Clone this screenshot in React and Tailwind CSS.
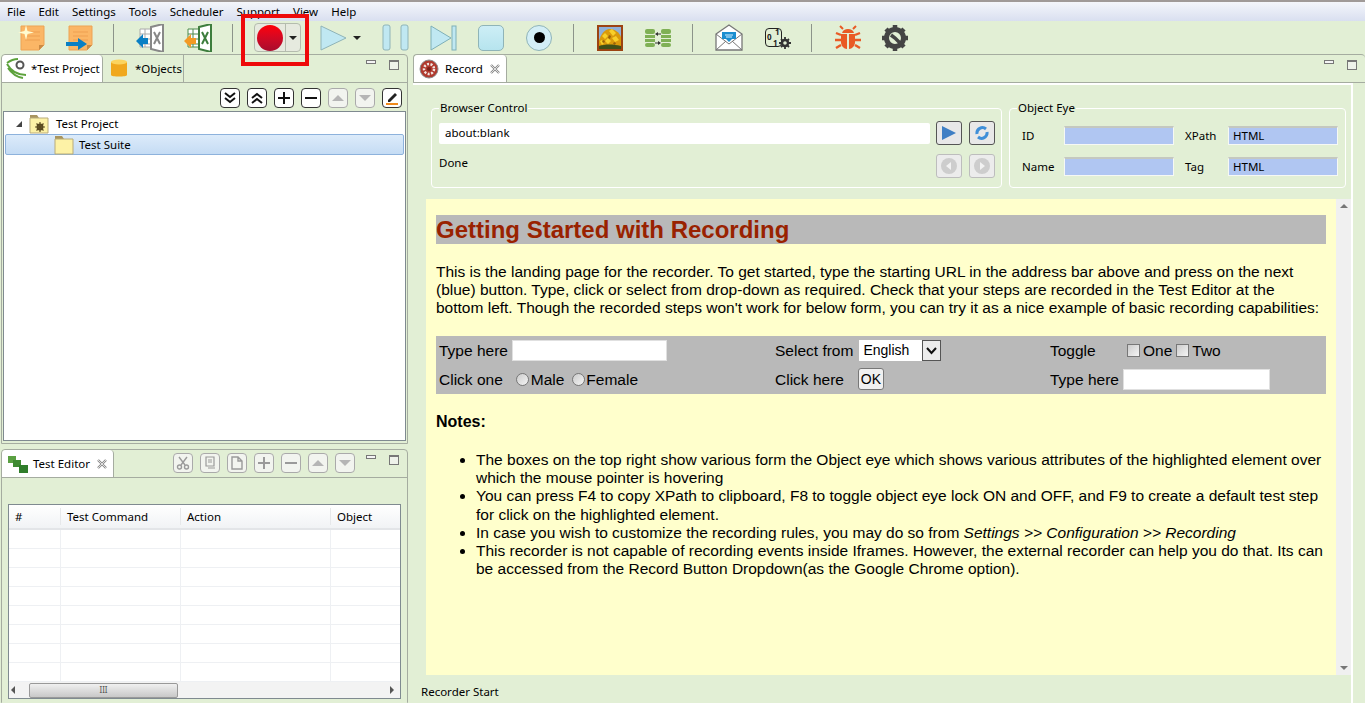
import { useState } from 'react'

const ui = { fontFamily: '"Noto Sans", sans-serif' }
const web = { fontFamily: '"Liberation Sans", Arial, sans-serif' }

function Sep({ className }) {
  return <div className={`h-[28px] w-px shrink-0 bg-[#8c948a] ${className}`} />
}

function Slot({ className = '', children }) {
  return <div className={`flex h-full w-[48px] shrink-0 items-center justify-center ${className}`}>{children}</div>
}

function NoteIcon({ star, arrow }) {
  return (
    <svg width="30" height="30" viewBox="0 0 30 30">
      <path d="M4 3h23v19l-5 5H4z" fill="#fbb666" stroke="#eda355" />
      <path d="M22 27v-5h5z" fill="#c98a45" />
      <path d="M8 9h15M8 13h15M8 17h15" stroke="#ee9f50" />
      {star && <path d="M9 2l1.500 6L17 9.500 10.500 11 9 17 7.500 11 1 9.500 7.500 8z" fill="#fffbd0" />}
      {arrow && <path d="M1 19h12v-4l9 6-9 6v-4H1z" fill="#0a7fc4" />}
    </svg>
  )
}

function ExcelIcon({ color, grid, arrow }) {
  return (
    <svg width="30" height="28" viewBox="0 0 30 28">
      <path d="M5 5h13v18H5z" fill="#fff" />
      <path d="M5 5h13v18H5zM5 10h13M5 15h13M5 20h13M10 5v18" fill="none" stroke={grid} />
      <path d="M16 3l12-3v28l-12-3z" fill="#fff" stroke={color} strokeWidth="2" />
      <path d="M19 8l6 12M25 8l-6 12" stroke={color} strokeWidth="2" />
      <path d="M1 17l7-7v4h5v6H8v4z" fill={arrow} />
    </svg>
  )
}

function RecordButton() {
  return (
    <div className="ml-[21px] flex h-[29px] w-[47px] shrink-0 rounded border border-[#b4bcae] bg-[#e6eadf]">
      <div className="flex w-[31px] items-center justify-center border-r border-[#b4bcae]">
        <div className="h-[26px] w-[26px] rounded-full bg-gradient-to-b from-[#ff0000] to-[#a80b2c]" />
      </div>
      <div className="flex flex-1 items-center justify-center">
        <Caret />
      </div>
    </div>
  )
}

function Caret() {
  return <div className="h-0 w-0 border-x-[4px] border-t-[4px] border-x-transparent border-t-[#222]" />
}

function PlayIcon() {
  return (
    <svg width="27" height="26" viewBox="0 0 27 26">
      <path d="M1 1l25 12L1 25z" fill="#c0e8f2" stroke="#8fb4b8" />
    </svg>
  )
}

function PauseIcon() {
  return (
    <svg width="27" height="27" viewBox="0 0 27 27">
      <rect x="1" y="1" width="7" height="25" rx="2" fill="#c0e8f2" stroke="#8fb4b8" />
      <rect x="19" y="1" width="7" height="25" rx="2" fill="#c0e8f2" stroke="#8fb4b8" />
    </svg>
  )
}

function NextIcon() {
  return (
    <svg width="27" height="26" viewBox="0 0 27 26">
      <path d="M1 1l20 12L1 25z" fill="#c0e8f2" stroke="#7fb0b8" />
      <rect x="22" y="1" width="4" height="24" fill="#c0e8f2" stroke="#7fb0b8" />
    </svg>
  )
}

function GoldImage() {
  return (
    <svg width="26" height="26" viewBox="0 0 26 26">
      <rect width="26" height="26" fill="#9c4312" />
      <rect x="2" y="2" width="22" height="22" fill="#8fb0d8" />
      <path d="M2 24v-8c2-7 5-11 10-12 6 0 10 3 12 8v12z" fill="#d99a0c" />
      <path d="M5 11l3-3 3 3-3 3zM12 6l3-2 4 4-3 3zM8 16l3-3 3 3-3 3zM15 13l4-2 3 4-4 2zM3 16l2-1 2 3-2 2z" fill="#f8d02a" />
      <path d="M12 10l2 1-1 3-2-1zM6 15l2 1-1 2-2-1zM17 17l2 1-1 2-2-1z" fill="#96620a" />
      <path d="M2 21c6-2 14-2 22 0v3H2z" fill="#3f5018" />
    </svg>
  )
}

function DbCompare() {
  const stack = (x) => (
    <g fill="#7fb055">
      <rect x={x} y="0" width="10" height="5" rx="2" />
      <rect x={x} y="6" width="10" height="3" />
      <rect x={x} y="10" width="10" height="3" />
      <rect x={x} y="14" width="10" height="4" rx="2" />
    </g>
  )
  return (
    <svg width="26" height="18" viewBox="0 0 26 18">
      {stack(0)}
      {stack(16)}
      <path d="M12 5h4M10 14h4" stroke="#333" />
      <path d="M10 5l3-2v4zM16 14l-3-2v4z" fill="#333" />
    </svg>
  )
}

function MailIcon() {
  return (
    <svg width="28" height="27" viewBox="0 0 28 27">
      <path d="M1 10L14 1l13 9v16H1z" fill="#fff" stroke="#777" strokeWidth="1.300" />
      <path d="M1 26l10-9M27 26l-10-9M1 10l13 10 13-10" fill="none" stroke="#777" />
      <path d="M7 8h14v7h-4l-3 3-3-3H7z" fill="#1b8ed0" />
      <path d="M10 11h8M11 13h6" stroke="#d8f0ff" />
    </svg>
  )
}

function BinaryIcon() {
  return (
    <div className="relative h-[26px] w-[26px]">
      <div className="absolute left-px top-[3px] h-[19px] w-[17px] rounded-[4px] border border-[#222]" />
      <span className="absolute left-[3px] top-[8px] text-[8px] font-bold leading-none text-[#222]">0</span>
      <span className="absolute left-[11px] top-[3px] text-[8px] font-bold leading-none text-[#222]">1</span>
      <span className="absolute left-[9px] top-[14px] text-[8px] font-bold leading-none text-[#222]">1</span>
      <svg className="absolute left-[15px] top-[12px]" width="12" height="12" viewBox="0 0 12 12">
        <circle cx="6" cy="6" r="3" fill="none" stroke="#333" strokeWidth="2.400" />
        <path d="M6 0v3M6 9v3M0 6h3M9 6h3M2 2l2 2M8 8l2 2M2 10l2-2M8 4l2-2" stroke="#333" strokeWidth="1.800" />
      </svg>
    </div>
  )
}

function BugIcon() {
  return (
    <svg width="26" height="26" viewBox="0 0 26 26" fill="#e95a25">
      <path d="M7 8c1-3 3-4 6-4s5 1 6 4z" />
      <path d="M6 9h6v15c-3 0-6-3-6-7zM14 9h6v8c0 4-3 7-6 7z" />
      <path d="M8 4L5 1M18 4l3-3" stroke="#e95a25" strokeWidth="2" />
      <path d="M6 10L1 8M6 15H0M6 20l-5 3M20 10l5-2M20 15h6M20 20l5 3" stroke="#e95a25" strokeWidth="2.400" />
    </svg>
  )
}

function GearIcon() {
  return (
    <svg width="26" height="26" viewBox="0 0 26 26">
      <circle cx="13" cy="13" r="8.500" fill="none" stroke="#444" strokeWidth="5" />
      <path d="M13 0v5M13 21v5M0 13h5M21 13h5M4 4l3.500 3.500M18.500 18.500L22 22M4 22l3.500-3.500M18.500 7.500L22 4" stroke="#444" strokeWidth="4.500" />
      <path d="M9 10l4 3 5 5" stroke="#444" strokeWidth="3.500" />
    </svg>
  )
}

function MainToolbar() {
  return (
    <div className="flex h-[33px] items-center bg-[#e2efd5] pl-[8px]">
      <Slot><NoteIcon star /></Slot>
      <Slot><NoteIcon arrow /></Slot>
      <Sep className="ml-[9px]" />
      <Slot className="ml-[12px]"><ExcelIcon color="#888" grid="#aaa" arrow="#0a7fc4" /></Slot>
      <Slot><ExcelIcon color="#3d7d3d" grid="#4d8a4d" arrow="#f39a24" /></Slot>
      <Sep className="ml-[10px]" />
      <RecordButton />
      <div className="ml-[16px] flex w-[32px] shrink-0 justify-center"><PlayIcon /></div>
      <div className="ml-[4px] flex w-[8px] shrink-0 justify-center"><Caret /></div>
      <Slot className="ml-[10px]"><PauseIcon /></Slot>
      <Slot><NextIcon /></Slot>
      <Slot><div className="h-[26px] w-[26px] rounded-[5px] border border-[#8fb4b8] bg-gradient-to-b from-[#cdeef6] to-[#b6e4ee]" /></Slot>
      <Slot>
        <div className="flex h-[26px] w-[26px] items-center justify-center rounded-full border border-[#8fb4b8] bg-[#d3eef6]">
          <div className="h-[11px] w-[11px] rounded-full bg-black" />
        </div>
      </Slot>
      <Sep className="ml-[10px]" />
      <Slot className="ml-[12px]"><GoldImage /></Slot>
      <Slot><DbCompare /></Slot>
      <Sep className="ml-[10px]" />
      <Slot className="ml-[12px]"><MailIcon /></Slot>
      <Slot><BinaryIcon /></Slot>
      <Sep className="ml-[10px]" />
      <Slot className="ml-[12px]"><BugIcon /></Slot>
      <Slot className="-ml-px"><GearIcon /></Slot>
    </div>
  )
}

function WindowButtons() {
  return (
    <div className="flex shrink-0 items-start">
      <div className="mt-[5px] h-[4px] w-[10px] border border-[#777] bg-[#f4f4f4]" />
      <div className="ml-[13px] mt-[5px] h-[10px] w-[10px] border border-[#777] border-t-2 bg-[#eef2ea]" />
    </div>
  )
}

function ToolButton({ disabled, children }) {
  return (
    <div className={`flex h-[20px] w-[20px] shrink-0 items-center justify-center rounded-[4px] border bg-[#f2f4ef] ${disabled ? 'border-[#aaa]' : 'border-[#333] bg-white'}`}>
      <svg width="14" height="14" viewBox="0 0 14 14" fill="none" stroke={disabled ? '#9a9a9a' : '#111'} strokeWidth="2">
        {children}
      </svg>
    </div>
  )
}

const plus = <path d="M7 1v12M1 7h12" />
const minus = <path d="M1 7h12" />
const upTri = <path d="M1 10l6-6 6 6z" fill="#b5b5b5" stroke="none" />
const downTri = <path d="M1 4l6 6 6-6z" fill="#b5b5b5" stroke="none" />

function FolderIcon({ gear }) {
  return (
    <svg width="20" height="20" viewBox="0 0 20 20">
      <path d="M1 1h7l2 3H1z" fill="#a9955f" />
      <path d="M1 4h18v15H1z" fill="#fdf2a6" stroke="#b8ab7a" />
      {gear && <circle cx="11" cy="13" r="2.500" fill="none" stroke="#5a4a20" strokeWidth="2" />}
      {gear && <path d="M11 8v10M6 13h10M7.500 9.500l7 7M14.500 9.500l-7 7" stroke="#5a4a20" strokeWidth="1.200" />}
    </svg>
  )
}

function CloseX() {
  return (
    <svg width="10" height="10" viewBox="0 0 10 10" className="shrink-0">
      <path d="M1 1l8 8M9 1L1 9" stroke="#8a8a8a" strokeWidth="2.400" />
      <path d="M1 1l8 8M9 1L1 9" stroke="#f4f4f4" strokeWidth="0.800" />
    </svg>
  )
}

function ProjectPanel() {
  return (
    <div className="h-[390px] rounded-t-[4px] border border-[#a5aca0]">
      <div className="flex h-[28px] border-b border-[#a5aca0]">
        <div className="flex w-[101px] items-center gap-[2px] whitespace-nowrap rounded-t-[4px] border-r border-[#a5aca0] bg-white pl-[3px] text-[11.500px] text-black">
          <svg width="24" height="22" viewBox="0 0 24 22" fill="none" className="shrink-0">
            <path d="M2 6c4 7 10 11 19 11M3 10c4 6 9 9 15 10M2 5c4-3 7-4 11-4" stroke="#5da23c" strokeWidth="2" />
            <circle cx="15" cy="7" r="3.500" stroke="#555" strokeWidth="2" />
          </svg>
          <span>*Test Project</span>
        </div>
        <div className="flex w-[81px] items-center gap-[7px] border-r border-[#a5aca0] pl-[7px] text-[11.500px] text-black">
          <svg width="18" height="19" viewBox="0 0 18 19" className="shrink-0">
            <path d="M1 3v13c0 2 16 2 16 0V3z" fill="#f0a81e" />
            <ellipse cx="9" cy="3" rx="8" ry="2.500" fill="#fbd45f" />
          </svg>
          <span>*Objects</span>
        </div>
        <div className="flex flex-1 justify-end pr-[8px]">
          <WindowButtons />
        </div>
      </div>
      <div className="h-[360px] bg-[#e2efd5] px-px pt-px">
        <div className="flex h-[27px] items-center justify-end gap-[7px] bg-[#e2efd5] pr-[4px]">
          <ToolButton><path d="M2 2l5 4 5-4M2 7l5 4 5-4" /></ToolButton>
          <ToolButton><path d="M2 7l5-4 5 4M2 12l5-4 5 4" /></ToolButton>
          <ToolButton>{plus}</ToolButton>
          <ToolButton>{minus}</ToolButton>
          <ToolButton disabled>{upTri}</ToolButton>
          <ToolButton disabled>{downTri}</ToolButton>
          <div className="flex h-[20px] w-[20px] shrink-0 items-end justify-center rounded-[4px] border border-[#333] bg-white pb-px">
            <svg width="14" height="15" viewBox="0 0 14 15">
              <path d="M3 9l7-7 2 2-7 7H3z" fill="#222" />
              <path d="M1 13h12" stroke="#f08a1c" strokeWidth="2" />
            </svg>
          </div>
        </div>
        <div className="h-[330px] border border-[#7f8a90] bg-white px-px pt-px text-[11.500px] text-black">
          <div className="flex h-[21px] items-center pl-[11px]">
            <div className="h-0 w-0 border-b-[6px] border-l-[6px] border-b-[#444] border-l-transparent" />
            <div className="ml-[7px]"><FolderIcon gear /></div>
            <span className="ml-[7px]">Test Project</span>
          </div>
          <div className="flex h-[21px] items-center rounded-[2px] border border-[#8db2dc] bg-gradient-to-b from-[#dcebfa] to-[#c5dcf4] pl-[48px]">
            <FolderIcon />
            <span className="ml-[5px]">Test Suite</span>
          </div>
        </div>
      </div>
    </div>
  )
}

function EditorPanel() {
  const rows = [0, 1, 2, 3, 4, 5, 6, 7]
  return (
    <div className="mt-[5px] flex-1 rounded-t-[4px] border border-[#a5aca0]">
      <div className="flex h-[28px] border-b border-[#a5aca0]">
        <div className="flex w-[112px] items-center rounded-t-[4px] border-r border-[#a5aca0] bg-white pl-[5px] text-[11.500px] text-black">
          <svg width="22" height="20" viewBox="0 0 22 20">
            <rect x="1" y="2" width="8" height="7" fill="#5aa042" />
            <rect x="6" y="6" width="8" height="7" fill="#3f8a32" />
            <rect x="12" y="11" width="9" height="8" fill="#2f7d2a" />
          </svg>
          <span className="ml-[4px]">Test Editor</span>
          <span className="ml-[7px]"><CloseX /></span>
        </div>
        <div className="flex flex-1 items-start justify-end pr-[8px] pt-[3px]">
          <div className="mr-[11px] flex gap-[7px]">
            <ToolButton disabled><path d="M3 1l6 8M11 1L5 9" strokeWidth="1.400" /><circle cx="3.500" cy="11" r="2" strokeWidth="1.400" /><circle cx="10.500" cy="11" r="2" strokeWidth="1.400" /></ToolButton>
            <ToolButton disabled><path d="M3 1h8v9H3zM5 4h4M5 6h4M5 12h7" strokeWidth="1.200" /></ToolButton>
            <ToolButton disabled><path d="M2 1h6l4 4v8H2zM8 1v4h4" strokeWidth="1.400" /></ToolButton>
            <ToolButton disabled>{plus}</ToolButton>
            <ToolButton disabled>{minus}</ToolButton>
            <ToolButton disabled>{upTri}</ToolButton>
            <ToolButton disabled>{downTri}</ToolButton>
          </div>
          <div className="-mt-[3px]"><WindowButtons /></div>
        </div>
      </div>
      <div className="h-full bg-[#e2efd5] px-[6px] pt-[26px]">
        <div className="h-[195px] w-[393px] border border-[#7f8a90] bg-white text-[11.500px] text-black">
          <div className="grid h-[25px] grid-cols-[51px_120px_150px_1fr] items-center border-b-2 border-[#e3e5e8] bg-gradient-to-b from-white to-[#f1f3f5]">
            <span className="pl-[6px]">#</span>
            <span className="border-l border-[#e6e8ea] pl-[6px]">Test Command</span>
            <span className="border-l border-[#e6e8ea] pl-[6px]">Action</span>
            <span className="border-l border-[#e6e8ea] pl-[6px]">Object</span>
          </div>
          {rows.map((r) => (
            <div key={r} className="grid h-[19px] grid-cols-[51px_120px_150px_1fr] border-b border-[#eef0f3]">
              <span />
              <span className="border-l border-[#eef0f3]" />
              <span className="border-l border-[#eef0f3]" />
              <span className="border-l border-[#eef0f3]" />
            </div>
          ))}
          <div className="flex h-[16px] items-center bg-[#f3f3f3] px-[2px]">
            <div className="h-0 w-0 border-y-[4px] border-r-[4px] border-y-transparent border-r-[#555]" />
            <div className="ml-[14px] flex h-[15px] w-[149px] items-center justify-center rounded-[2px] border border-[#999] bg-gradient-to-b from-[#f0f0f0] to-[#c8c8c8] text-[8px] leading-none text-[#555]">III</div>
            <div className="ml-auto mr-[4px] h-0 w-0 border-y-[4px] border-l-[4px] border-y-transparent border-l-[#555]" />
          </div>
        </div>
      </div>
    </div>
  )
}

function NavButton({ disabled, children }) {
  return (
    <div className={`flex h-[24px] w-[26px] items-center justify-center rounded-[3px] border ${disabled ? 'border-[#bdbdbd] bg-[#ececec]' : 'border-[#555] bg-[#e8e8e8]'}`}>
      {children}
    </div>
  )
}

function EyeField({ label, value }) {
  return (
    <>
      <span>{label}</span>
      <div className="h-[19px] border border-t-2 border-[#f6f8f4] border-t-[#c4c8c0] bg-[#b0c6f2] pl-[4px] leading-[16px]">{value}</div>
    </>
  )
}

function RecordControls() {
  return (
    <div className="flex h-[114px] gap-[7px] pl-[18px] pt-[15px] text-[11.500px] text-black">
      <fieldset className="h-[88px] w-[571px] rounded-[4px] border border-white pl-[7px]">
        <legend className="px-px leading-[16px]">Browser Control</legend>
        <div className="mt-[5px] flex h-[24px] items-center">
          <div className="mt-[1px] h-[21px] w-[491px] rounded-[2px] bg-white pl-[6px] leading-[20px]">about:blank</div>
          <div className="ml-[6px] flex gap-[7px]">
            <NavButton>
              <svg width="16" height="16" viewBox="0 0 16 16"><path d="M1 1l14 7-14 7z" fill="#3f7fc4" /></svg>
            </NavButton>
            <NavButton>
              <svg width="16" height="16" viewBox="0 0 16 16" fill="none" stroke="#3f8fd8" strokeWidth="3">
                <path d="M3 9a5.500 5.500 0 0 1 9-5M13 7a5.500 5.500 0 0 1-9 5" />
              </svg>
            </NavButton>
          </div>
        </div>
        <div className="flex h-[33px] items-start pt-[9px]">
          <span className="w-[497px]">Done</span>
          <div className="flex gap-[7px]">
            <NavButton disabled>
              <svg width="16" height="16" viewBox="0 0 16 16"><circle cx="8" cy="8" r="8" fill="#cdcdcd" /><path d="M10 4v8L5 8z" fill="#f2f2f2" /></svg>
            </NavButton>
            <NavButton disabled>
              <svg width="16" height="16" viewBox="0 0 16 16"><circle cx="8" cy="8" r="8" fill="#cdcdcd" /><path d="M6 4v8l5-4z" fill="#f2f2f2" /></svg>
            </NavButton>
          </div>
        </div>
      </fieldset>
      <fieldset className="h-[88px] w-[337px] rounded-[4px] border border-white pl-[12px]">
        <legend className="ml-[-5px] px-px leading-[16px]">Object Eye</legend>
        <div className="mt-[10px] grid grid-cols-[42px_110px_54px_110px] items-center gap-y-[12px]">
          <EyeField label="ID" value="" />
          <span className="pl-[11px]">XPath</span>
          <div className="h-[19px] border border-t-2 border-[#f6f8f4] border-t-[#c4c8c0] bg-[#b0c6f2] pl-[4px] leading-[16px]">HTML</div>
          <EyeField label="Name" value="" />
          <span className="pl-[11px]">Tag</span>
          <div className="h-[19px] border border-t-2 border-[#f6f8f4] border-t-[#c4c8c0] bg-[#b0c6f2] pl-[4px] leading-[16px]">HTML</div>
        </div>
      </fieldset>
    </div>
  )
}

function SampleForm() {
  const [lang, setLang] = useState('English')
  const textBox = 'h-[21px] border border-[#e0e0e0] bg-white'
  const radio = 'h-[13px] w-[13px] shrink-0 rounded-full border border-[#777] bg-gradient-to-br from-[#ccc] to-[#f4f4f4]'
  const check = 'h-[13px] w-[13px] shrink-0 border border-[#777] bg-gradient-to-br from-[#ccc] to-[#f4f4f4]'
  return (
    <div className="mt-[19px] grid h-[58px] w-[890px] grid-cols-[336px_275px_1fr] content-center gap-y-[7px] bg-[#b9b9b9] pl-[3px] text-[15.500px] leading-[21px] text-black">
      <div className="flex items-center">
        <span>Type here</span>
        <div className={`ml-[4px] w-[155px] ${textBox}`} />
      </div>
      <div className="flex items-center">
        <span>Select from</span>
        <div className="ml-[6px] flex h-[21px] w-[82px] bg-white text-[14px]">
          <span className="flex-1 pl-[4px] leading-[21px]">{lang}</span>
          <button type="button" onClick={() => setLang('English')} className="flex w-[19px] items-center justify-center border border-[#555] bg-[#ececec]">
            <svg width="11" height="8" viewBox="0 0 11 8" fill="none"><path d="M1 1l4.500 5L10 1" stroke="#111" strokeWidth="2" /></svg>
          </button>
        </div>
      </div>
      <div className="flex items-center">
        <span className="w-[77px]">Toggle</span>
        <div className={check} />
        <span className="ml-[3px]">One</span>
        <div className={`ml-[4px] ${check}`} />
        <span className="ml-[3px]">Two</span>
      </div>
      <div className="flex items-center">
        <span>Click one</span>
        <div className={`ml-[13px] ${radio}`} />
        <span className="ml-[2px]">Male</span>
        <div className={`ml-[8px] ${radio}`} />
        <span className="ml-px">Female</span>
      </div>
      <div className="flex items-center">
        <span>Click here</span>
        <div className="ml-[14px] flex h-[22px] w-[26px] items-center justify-center rounded-[3px] border border-[#777] bg-[#f0f0f0] text-[14px]">OK</div>
      </div>
      <div className="flex items-center">
        <span>Type here</span>
        <div className={`ml-[4px] w-[147px] ${textBox}`} />
      </div>
    </div>
  )
}

function LandingPage() {
  return (
    <div className="h-[476px] w-[911px] bg-[#ffffcc] pl-[10px] pt-[16px] text-black" style={web}>
      <h1 className="flex h-[29px] w-[890px] items-center bg-[#b9b9b9] text-[24px] font-bold text-[#992200]">
        Getting Started with Recording
      </h1>
      <p className="mt-[19px] w-[890px] text-[15.500px] leading-[18px]">
        This is the landing page for the recorder. To get started, type the starting URL in the address bar above and press on the next (blue) button. Type, click or select from drop-down as required. Check that your steps are recorded in the Test Editor at the bottom left. Though the recorded steps won't work for below form, you can try it as a nice example of basic recording capabilities:
      </p>
      <SampleForm />
      <p className="mt-[19px] text-[16px] font-bold leading-[18px]">Notes:</p>
      <ul className="mt-[20px] w-[890px] list-disc pl-[40px] text-[15.500px] leading-[18.200px]">
        <li>The boxes on the top right show various form the Object eye which shows various attributes of the highlighted element over which the mouse pointer is hovering</li>
        <li>You can press F4 to copy XPath to clipboard, F8 to toggle object eye lock ON and OFF, and F9 to create a default test step for click on the highlighted element.</li>
        <li>In case you wish to customize the recording rules, you may do so from <i>Settings &gt;&gt; Configuration &gt;&gt; Recording</i></li>
        <li>This recorder is not capable of recording events inside Iframes. However, the external recorder can help you do that. Its can be accessed from the Record Button Dropdown(as the Google Chrome option).</li>
      </ul>
    </div>
  )
}

function RecordPanel() {
  return (
    <div className="ml-[5px] flex h-full w-[952px] flex-col">
      <div className="flex h-[29px] rounded-t-[4px] border-y border-l border-[#a5aca0]">
        <div className="flex w-[93px] items-center rounded-t-[4px] border-r border-[#a5aca0] bg-white pl-[5px] text-[11.500px] text-black">
          <svg width="20" height="20" viewBox="0 0 20 20">
            <circle cx="10" cy="10" r="9" fill="#b03a2e" stroke="#8d8d8d" />
            <circle cx="10" cy="10" r="5" fill="none" stroke="#f1e6e2" strokeWidth="2.500" strokeDasharray="2 1.500" />
            <circle cx="10" cy="10" r="2" fill="#7d2018" />
          </svg>
          <span className="ml-[6px]">Record</span>
          <span className="ml-[7px]"><CloseX /></span>
        </div>
        <div className="flex flex-1 justify-end pr-[8px]">
          <WindowButtons />
        </div>
      </div>
      <div className="w-[940px] flex-1 border-t-2 border-r-2 border-white bg-[#e2efd5]">
        <RecordControls />
        <div className="flex pl-[13px]">
          <LandingPage />
          <div className="flex h-[476px] w-[15px] flex-col items-center justify-between bg-[#f0f0f0] py-[5px]">
            <div className="h-0 w-0 border-x-[4px] border-b-[4px] border-x-transparent border-b-[#777]" />
            <div className="h-0 w-0 border-x-[4px] border-t-[4px] border-x-transparent border-t-[#777]" />
          </div>
        </div>
        <p className="pl-[8px] pt-[9px] text-[11.500px] leading-[16px] text-black">Recorder Start</p>
      </div>
    </div>
  )
}

export default function App() {
  return (
    <div className="relative flex h-[703px] w-[1365px] flex-col overflow-hidden bg-[#e2efd5]" style={ui}>
      <div className="h-[2px] bg-[#a09a98]" />
      <div className="flex h-[19px] items-center gap-[13px] bg-gradient-to-b from-[#f4f6fb] to-[#d9dff0] pl-[7px] text-[11.500px] text-black">
        <span>File</span>
        <span>Edit</span>
        <span>Settings</span>
        <span>Tools</span>
        <span>Scheduler</span>
        <span>Support</span>
        <span>View</span>
        <span>Help</span>
      </div>
      <MainToolbar />
      <div className="flex flex-1 pl-px">
        <div className="flex h-full w-[407px] flex-col">
          <ProjectPanel />
          <EditorPanel />
        </div>
        <RecordPanel />
      </div>
      {/* red highlight drawn over the toolbar */}
      <div className="absolute left-[241px] top-[14px] h-[52px] w-[68px] border-[4px] border-[#ee0a0a]" />
    </div>
  )
}
